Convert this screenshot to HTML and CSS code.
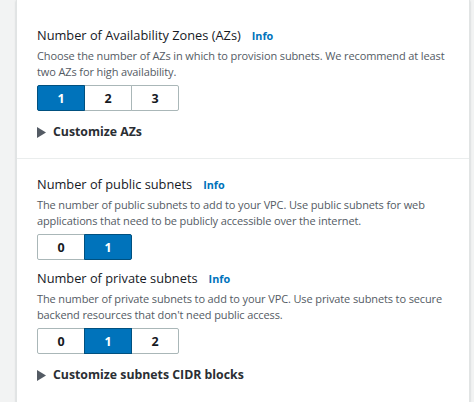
FILE: index.html
```html
<!DOCTYPE html>
<html>
<head>
<meta charset="utf-8">
<link rel="stylesheet" href="styles.css">
</head>
<body>
<div class="page">
  <div class="card">
    <div class="section first">
      <div class="label">Number of Availability Zones (AZs)<span class="info">Info</span></div>
      <div class="desc">Choose the number of AZs in which to provision subnets. We recommend at least two AZs for high availability.</div>
      <div class="seg">
        <div class="btn on">1</div><div class="btn">2</div><div class="btn">3</div>
      </div>
      <div class="expander"><svg class="tri" width="9" height="11" viewBox="0 0 9 11"><polygon points="0,0 9,5.5 0,11" fill="#545b64"/></svg>Customize AZs</div>
    </div>
    <div class="section second">
      <div class="label">Number of public subnets<span class="info">Info</span></div>
      <div class="desc">The number of public subnets to add to your VPC. Use public subnets for web applications that need to be publicly accessible over the internet.</div>
      <div class="seg">
        <div class="btn">0</div><div class="btn on">1</div>
      </div>
      <div class="label mt">Number of private subnets<span class="info">Info</span></div>
      <div class="desc">The number of private subnets to add to your VPC. Use private subnets to secure backend resources that don't need public access.</div>
      <div class="seg">
        <div class="btn">0</div><div class="btn on">1</div><div class="btn">2</div>
      </div>
      <div class="expander"><svg class="tri" width="9" height="11" viewBox="0 0 9 11"><polygon points="0,0 9,5.5 0,11" fill="#545b64"/></svg>Customize subnets CIDR blocks</div>
    </div>
  </div>
</div>
</body>
</html>
```
FILE: styles.css
```css
html, body {
  margin: 0;
  padding: 0;
  background: #f2f3f3;
  font-family: "Open Sans", "Noto Sans", Arial, sans-serif;
  color: #16191f;
}
.page {
  padding: 0 4px 0 16px;
  height: 402px;
  overflow: hidden;
}
.card {
  background: #fff;
  border-left: 1px solid #e1e4e4;
  border-right: 1px solid #e1e4e4;
  height: 402px;
  box-shadow: 0 1px 2px rgba(0,28,36,0.2);
}
.section {
  padding: 0 18px 0 20px;
}
.section.first {
  padding-top: 25px;
  padding-bottom: 16px;
  border-bottom: 1px solid #eaeded;
}
.section.second {
  padding-top: 15px;
}
.label {
  font-size: 12.8px;
  line-height: 20px;
  color: #16191f;
}
.label.mt {
  margin-top: 8px;
}
.info {
  font-size: 10.8px;
  font-weight: 700;
  color: #0073bb;
  margin-left: 11px;
}
.desc {
  font-size: 11px;
  letter-spacing: -0.12px;
  line-height: 16px;
  color: #545b64;
  margin-top: 2px;
}
.seg {
  display: flex;
  margin-top: 5px;
}
.btn {
  width: 46px;
  height: 24px;
  border: 1px solid #aab7b8;
  margin-left: -1px;
  display: flex;
  align-items: center;
  justify-content: center;
  font-size: 12.5px;
  font-weight: 700;
  color: #16191f;
  background: #fff;
}
.btn:first-child {
  margin-left: 0;
  border-radius: 2px 0 0 2px;
}
.btn:last-child {
  border-radius: 0 2px 2px 0;
}
.btn.on {
  background: #0073bb;
  border-color: #00507f;
  color: #fff;
  position: relative;
}
.expander {
  margin-top: 11px;
  font-size: 12.3px;
  line-height: 20px;
  font-weight: 700;
  color: #2a2e33;
  display: flex;
  align-items: center;
}
.tri {
  margin-right: 7px;
}
```
